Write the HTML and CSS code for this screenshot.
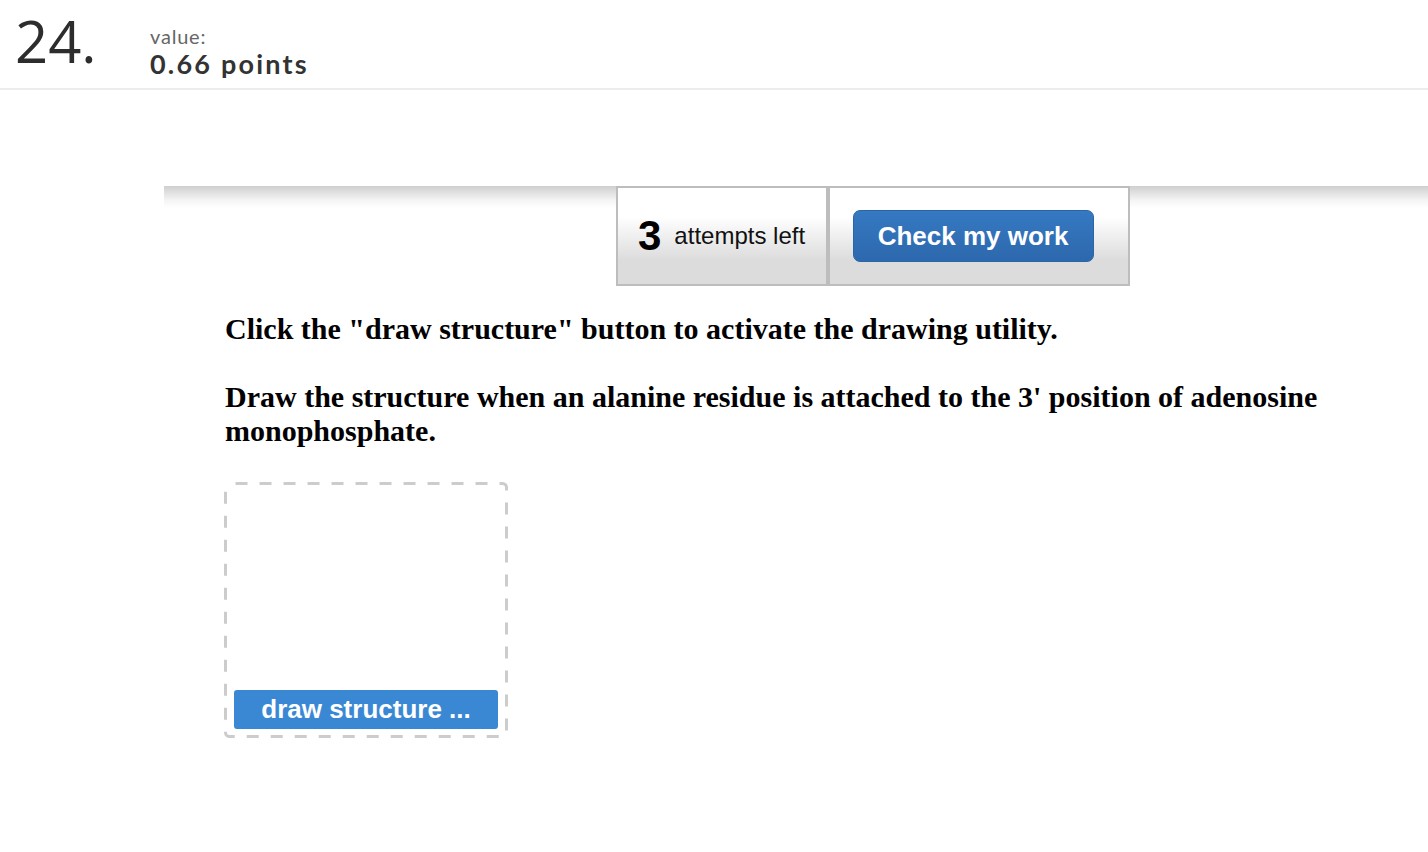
FILE: index.html
```html
<!DOCTYPE html>
<html>
<head>
<meta charset="utf-8">
<link rel="stylesheet" href="styles.css">
</head>
<body>
<header class="qhead">
  <div class="qnum">24.</div>
  <div class="qvalue">
    <div class="qvalue-label">value:</div>
    <div class="qvalue-points">0.66 points</div>
  </div>
</header>
<main class="qbody">
  <div class="toolbar">
    <div class="tbox">
      <div class="cell attempts"><span class="att-num">3</span><span class="att-text">attempts left</span></div>
      <div class="cell check"><button class="check-btn">Check my work</button></div>
    </div>
  </div>
  <div class="question">
    <p class="para">Click the "draw structure" button to activate the drawing utility.</p>
    <p class="para">Draw the structure when an alanine residue is attached to the 3' position of adenosine monophosphate.</p>
    <div class="drawbox">
      <button class="draw-btn">draw structure ...</button>
    </div>
  </div>
</main>
</body>
</html>
```

FILE: styles.css
```css
html, body { margin: 0; padding: 0; background: #fff; }
body { font-family: "Open Sans", sans-serif; color: #333; }

.qhead {
  display: flex;
  align-items: flex-start;
  height: 88px;
  border-bottom: 2px solid #ececec;
  padding-left: 15px;
}
.qnum {
  font-family: "Open Sans", sans-serif;
  font-size: 58px;
  font-weight: 400;
  line-height: 1;
  margin-top: 12px;
  width: 135px;
  color: #2d2d2d;
}
.qvalue { margin-top: 24px; display: flex; flex-direction: column; }
.qvalue-label { font-family: "Lato", sans-serif; font-size: 20px; color: #666; line-height: 24px; letter-spacing: 0.8px; }
.qvalue-points { font-family: "Lato", sans-serif; font-size: 27px; font-weight: 700; color: #333; line-height: 32px; letter-spacing: 2.2px; }

.qbody { padding-top: 96px; }

.toolbar {
  margin-left: 164px;
  background: linear-gradient(to bottom, #cfcfcf 0px, #f4f4f4 14px, #fff 22px, #fff 100%);
  display: flex;
}
.tbox {
  margin-left: 452px;
  display: flex;
}
.cell {
  height: 96px;
  border: 2px solid #bdbdbd;
  background: linear-gradient(to bottom, #fff 0%, #fff 30%, #dcdcdc 75%, #dcdcdc 100%);
  display: flex;
  align-items: center;
  box-sizing: content-box;
}
.attempts { width: 188px; padding-left: 20px; justify-content: flex-start; gap: 13px; }
.check { width: 298px; justify-content: center; }
.att-num { font-family: "Liberation Sans", Arial, sans-serif; font-weight: 700; font-size: 42px; color: #000; line-height: 1; }
.att-text { font-family: "Liberation Sans", Arial, sans-serif; font-size: 24px; color: #111; }
.check-btn {
  width: 241px; height: 52px;
  margin-left: -12px;
  border: 1px solid #2a65a8;
  border-radius: 7px;
  background: linear-gradient(to bottom, #3579c2, #2d68ad);
  color: #fff;
  font-family: "Liberation Sans", Arial, sans-serif;
  font-weight: 700;
  font-size: 26px;
  padding: 0;
}

.question { padding-left: 225px; padding-right: 80px; padding-top: 26px; }
.para {
  font-family: "Liberation Serif", "Times New Roman", serif;
  font-weight: 700;
  font-size: 30px;
  line-height: 34px;
  color: #000;
  margin: 0 0 34px 0;
}
.drawbox {
  margin-left: -1px;
  margin-top: 16px;
  width: 284px;
  height: 256px;
  box-sizing: border-box;
  background: url("data:image/svg+xml,%3Csvg xmlns='http://www.w3.org/2000/svg' width='284' height='256'%3E%3Crect x='1.5' y='1.5' width='281' height='253' rx='4' fill='none' stroke='%23cccccc' stroke-width='3' stroke-dasharray='12 12' stroke-dashoffset='-6'/%3E%3C/svg%3E") no-repeat;
  display: flex;
  flex-direction: column;
  justify-content: flex-end;
  align-items: center;
  padding-bottom: 9px;
}
.draw-btn {
  width: 264px; height: 39px;
  border: none;
  border-radius: 3px;
  background: #3a87d4;
  color: #fff;
  font-family: "Liberation Sans", Arial, sans-serif;
  font-weight: 700;
  font-size: 26px;
  padding: 0;
}
```
